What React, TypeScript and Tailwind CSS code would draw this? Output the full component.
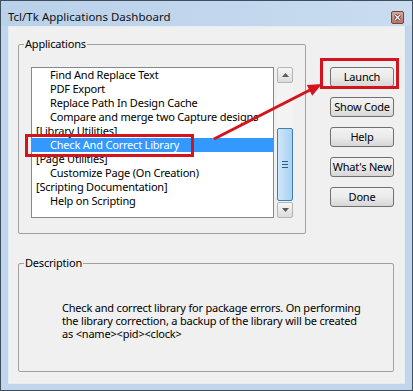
import React from "react";

const items: { label: string; sub: boolean; selected?: boolean }[] = [
  { label: "Find And Replace Text", sub: true },
  { label: "PDF Export", sub: true },
  { label: "Replace Path In Design Cache", sub: true },
  { label: "Compare and merge two Capture designs", sub: true },
  { label: "[Library Utilities]", sub: false },
  { label: "Check And Correct Library", sub: true, selected: true },
  { label: "[Page Utilities]", sub: false },
  { label: "Customize Page (On Creation)", sub: true },
  { label: "[Scripting Documentation]", sub: false },
  { label: "Help on Scripting", sub: true },
];

const buttons = ["Launch", "Show Code", "Help", "What's New", "Done"];

function ArrowButton({ up }: { up?: boolean }) {
  return (
    <div className="h-[16px] w-[16px] rounded-[2px] border border-[#b4b4b4] bg-gradient-to-b from-[#f6f6f6] to-[#dcdcdc] flex items-center justify-center">
      <svg width="7" height="4" viewBox="0 0 7 4">
        {up ? (
          <path d="M0 4 L3.5 0 L7 4 Z" fill="#5a5a5a" />
        ) : (
          <path d="M0 0 L7 0 L3.5 4 Z" fill="#5a5a5a" />
        )}
      </svg>
    </div>
  );
}

export default function App() {
  return (
    <div className="relative w-[413px] h-[391px] border border-[#3f4e5c] bg-[#c1d6ec] flex flex-col font-['Segoe_UI','Noto_Sans',sans-serif] text-[11px] tracking-[-0.2px] text-black">
      {/* title bar */}
      <div className="h-[25px] flex items-start justify-between pl-[7px] pr-[8px] bg-gradient-to-r from-[#b9d1ea] to-[#c9dcf0]">
        <span className="mt-[7px] leading-[18px] text-[11.5px] tracking-normal text-[#111]">
          Tcl/Tk Applications Dashboard
        </span>
        <div className="mt-[10px] h-[13px] w-[13px] rounded-[2px] border border-[#6e4640] bg-gradient-to-b from-[#d9a69c] to-[#b97467] flex items-center justify-center">
          <svg width="7" height="7" viewBox="0 0 7 7">
            <path d="M1 1 L6 6 M6 1 L1 6" stroke="#3a2020" strokeWidth="2.6" />
            <path d="M1 1 L6 6 M6 1 L1 6" stroke="#ffffff" strokeWidth="1.4" />
          </svg>
        </div>
      </div>

      {/* client area */}
      <div className="mx-[7px] h-[358px] bg-[#f0f0f0] pl-[10px] pt-[11px] border border-[#e4ecf4]">
        <div className="flex items-start -ml-px -mt-px">
          <fieldset className="w-[286px] border border-[#a0a0a0] rounded-[2px] px-[12px] pb-[15px]">
            <legend className="-ml-[7px] px-[1px] leading-[14px]">Applications</legend>
            <div className="mt-[16px] flex gap-[3px]">
              <div className="w-[243px] h-[151px] border border-[#828790] bg-white">
                {items.map((it) => (
                  <div
                    key={it.label}
                    className={
                      "h-[14px] leading-[14px] whitespace-nowrap " +
                      (it.sub ? "pl-[18px] " : "pl-[4px] ") +
                      (it.selected ? "bg-[#3399ff] text-white" : "")
                    }
                  >
                    {it.label}
                  </div>
                ))}
              </div>
              <div className="w-[16px] h-[151px] flex flex-col bg-[#f3f3f3]">
                <ArrowButton up />
                <div className="h-[45px]" />
                <div className="h-[73px] w-[16px] rounded-[2px] border border-[#3c7fb1] bg-gradient-to-r from-[#cfe7fa] to-[#a9d1f1] flex flex-col items-center justify-center gap-[2px]">
                  <div className="h-px w-[6px] bg-[#2b5b86]" />
                  <div className="h-px w-[6px] bg-[#2b5b86]" />
                  <div className="h-px w-[6px] bg-[#2b5b86]" />
                </div>
                <div className="flex-1" />
                <ArrowButton />
              </div>
            </div>
          </fieldset>

          <div className="ml-[24px] mt-[30px] flex flex-col gap-[10px]">
            {buttons.map((b) => (
              <button
                key={b}
                className="w-[64px] h-[20px] rounded-[3px] border border-[#707070] bg-gradient-to-b from-[#f2f2f2] via-[#ebebeb] to-[#d6d6d6] leading-[18px] whitespace-nowrap"
              >
                {b}
              </button>
            ))}
          </div>
        </div>

        <fieldset className="mt-[22px] -ml-px w-[376px] h-[116px] border border-[#a0a0a0] rounded-[2px] pl-[43px]">
          <legend className="-ml-[38px] px-[1px] leading-[14px]">Description</legend>
          <div className="mt-[31px] leading-[13px] whitespace-nowrap">
            Check and correct library for package errors. On performing
            <br />
            the library correction, a backup of the library will be created
            <br />
            as &lt;name&gt;&lt;pid&gt;&lt;clock&gt;
          </div>
        </fieldset>
      </div>

      {/* annotation overlays */}
      <div className="absolute left-[24px] top-[133px] w-[169px] h-[23px] border-[3px] border-[#d4141c]" />
      <div className="absolute left-[319px] top-[57px] w-[79px] h-[31px] border-[3px] border-[#d4141c]" />
      <svg className="absolute left-0 top-0" width="413" height="391" viewBox="-1 -1 413 391">
        <line x1="212" y1="137" x2="308" y2="88" stroke="#d4141c" strokeWidth="3" />
        <path d="M320 82 L310.2 93.7 L304.8 83.1 Z" fill="#d4141c" />
      </svg>
    </div>
  );
}
